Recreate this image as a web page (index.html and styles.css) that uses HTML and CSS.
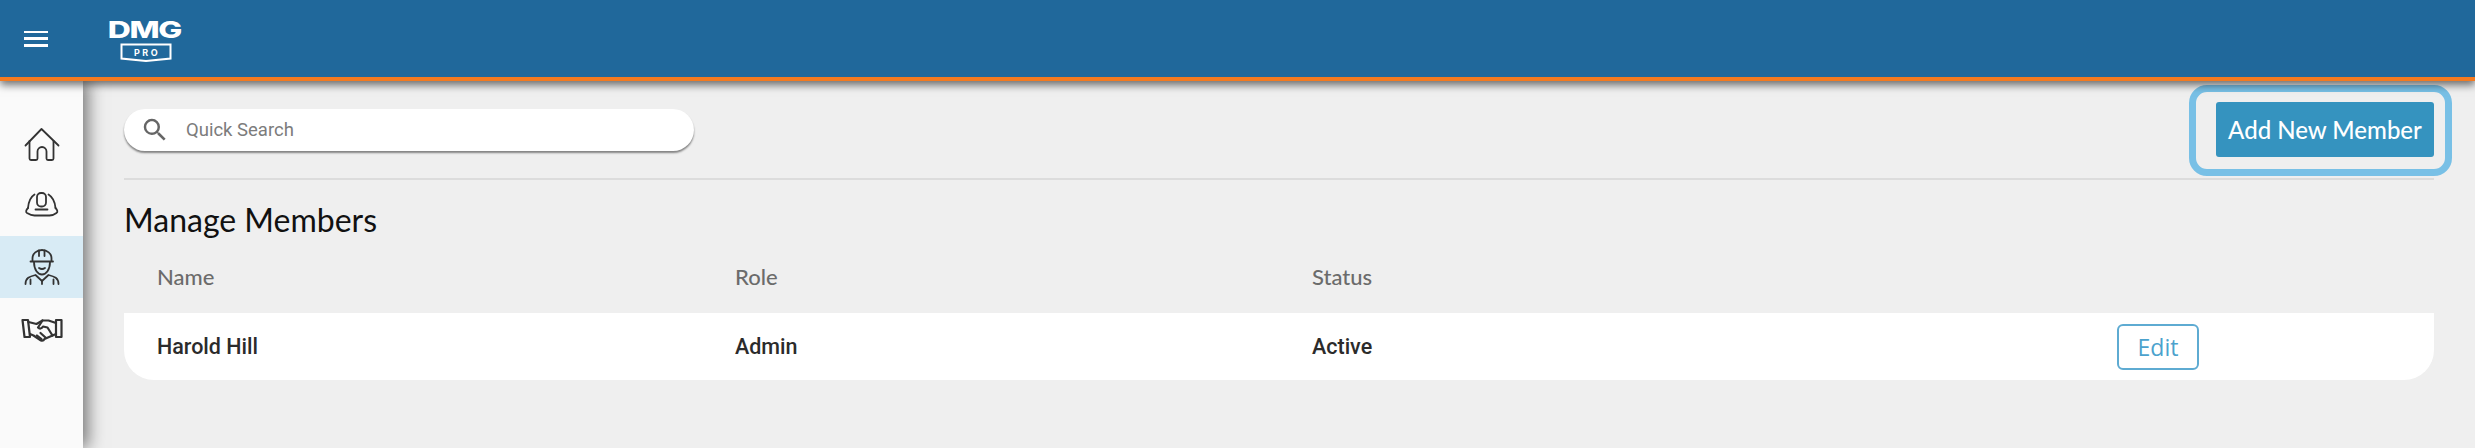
FILE: index.html
```html
<html>
<head>
    <link rel="stylesheet" href="styles.css">
</head>
<body>
    <header class="topbar">
        <button class="menu-btn">
            <span class="menu-line"></span>
            <span class="menu-line"></span>
            <span class="menu-line"></span>
        </button>
        <div class="logo">
            <div class="logo-name">DMG</div>
            <div class="logo-badge">
                <svg class="logo-frame" viewBox="0 0 52 19" fill="none" stroke="#fff" stroke-width="2">
                    <path d="M1.5 1.5H50.5V15.5L26 18L1.5 15.5Z"/>
                </svg>
                <span class="logo-pro">PRO</span>
            </div>
        </div>
    </header>

    <div class="layout">
        <nav class="sidebar">
            <a class="nav-item">
                <svg class="nav-icon" viewBox="19.5 121 44 44">
                    <path d="M25 145.5L41 129L58 145.5"/>
                    <path d="M29 141V158.500Q29 160 30.500 160H35.500Q37 160 37 158.500V151.500A4.500 4.500 0 0 1 46 151.500V158.500Q46 160 47.500 160H51.500Q53 160 53 158.500V141"/>
                </svg>
            </a>
            <a class="nav-item">
                <svg class="nav-icon" viewBox="19.5 183 44 44">
                    <path d="M27.500 208C28 202 30 197 34 194.500"/>
                    <path d="M48 194.500C52 197 54.500 202 55 208"/>
                    <rect x="36.500" y="193" width="9" height="13.500" rx="4"/>
                    <path d="M35 209.500H47"/>
                    <path d="M27.500 208C25.500 210 25 212 26.500 213C29 214.500 31 215.500 34 215.500H49C52 215.500 54 214.500 56 213C57.500 212 57 210 55 208"/>
                </svg>
            </a>
            <a class="nav-item active">
                <svg class="nav-icon" viewBox="19.500 245 44 44">
                    <path d="M32 260.500V258A9.500 8 0 0 1 51 258V260.500"/>
                    <path d="M30 261.500H52.500"/>
                    <path d="M38.500 250.500V256M44 250.500V256"/>
                    <path d="M33.500 262C33.500 270 37.500 274.500 41.500 274.500S49.500 270 49.500 262"/>
                    <path d="M38.500 268Q41.500 270 44.500 268"/>
                    <path d="M25 284C25 278 29 276.500 35 275L41.500 281L48 275C54 276.500 58 278 58 284"/>
                    <path d="M30 284V279.500M53 284V279.500M41.500 281V284"/>
                </svg>
            </a>
            <a class="nav-item">
                <svg class="nav-icon icon-heavy" viewBox="19.500 307 44 44">
                    <path d="M22 320H27.500L29.500 337H24Z"/>
                    <path d="M61 320H55.500V337H61Z"/>
                    <path d="M28 322L36 324L42 320.500H48L55.500 323"/>
                    <path d="M29.500 334L33 335.500L40.500 340.500C42 341 43.500 340 44 339L52 335.500L55.500 334"/>
                    <path d="M42 320.500L37.500 327.500C39 329 41 329 42.500 326.500L47 327.500L52 335.500"/>
                    <path d="M36.500 335.500L41 339M40 333L45 337.500"/>
                </svg>
            </a>
        </nav>

        <main class="content">
            <div class="toolbar">
                <div class="search">
                    <svg class="search-icon" viewBox="0 0 24 24">
                        <path d="M15.500 14h-.79l-.28-.27A6.471 6.471 0 0 0 16 9.500 6.500 6.500 0 1 0 9.500 16c1.610 0 3.090-.59 4.230-1.570l.27.28v.79l5 4.990L20.490 19l-4.990-5zm-6 0C7.010 14 5 11.990 5 9.500S7.010 5 9.500 5 14 7.010 14 9.500 11.990 14 9.500 14z"/>
                    </svg>
                    <span class="search-text">Quick Search</span>
                </div>
                <button class="add-btn">Add New Member</button>
            </div>

            <h1 class="page-title">Manage Members</h1>

            <div class="table-head">
                <div>Name</div>
                <div>Role</div>
                <div>Status</div>
            </div>
            <div class="table-row">
                <div>Harold Hill</div>
                <div>Admin</div>
                <div>Active</div>
                <button class="edit-btn">Edit</button>
            </div>
        </main>
    </div>
</body>
</html>
```

FILE: styles.css
```css
* {
    box-sizing: border-box;
}
body {
    margin: 0;
    height: 448px;
    overflow: hidden;
    display: flex;
    flex-direction: column;
    font-family: Roboto, sans-serif;
    background-color: #efefef;
}
.topbar {
    position: relative;
    z-index: 2;
    height: 81px;
    flex-shrink: 0;
    display: flex;
    align-items: center;
    padding-left: 24px;
    background-color: #20689b;
    border-bottom: 4px solid #f47a20;
    box-shadow: 0 4px 8px rgba(0, 0, 0, 0.55);
}
.menu-btn {
    width: 24px;
    height: 16px;
    padding: 0;
    border: none;
    background: none;
    display: flex;
    flex-direction: column;
    justify-content: space-between;
}
.menu-line {
    display: block;
    height: 2.500px;
    background-color: #fff;
}
.logo {
    margin-left: 61px;
    margin-top: 5px;
    width: 74px;
    display: flex;
    flex-direction: column;
    align-items: center;
    color: #fff;
}
.logo-name {
    margin-right: 4px;
    font-family: Inter, sans-serif;
    font-weight: 800;
    font-size: 23px;
    line-height: 19px;
    letter-spacing: -1px;
    transform: scaleX(1.39);
}
.logo-badge {
    position: relative;
    width: 52px;
    height: 19px;
    margin-top: 3px;
    display: flex;
    align-items: center;
    justify-content: center;
}
.logo-frame {
    position: absolute;
    left: 0;
    top: 0;
    width: 52px;
    height: 19px;
}
.logo-pro {
    font-family: Inter, sans-serif;
    font-size: 9px;
    font-weight: 700;
    letter-spacing: 2.500px;
    margin-left: 2px;
}
.layout {
    flex: 1;
    display: flex;
    min-height: 0;
}
.sidebar {
    position: relative;
    z-index: 1;
    width: 83px;
    flex-shrink: 0;
    padding-top: 31px;
    background-color: #fafafa;
    box-shadow: 5px 0 16px rgba(0, 0, 0, 0.5);
}
.nav-item {
    height: 62px;
    display: flex;
    align-items: center;
    justify-content: center;
}
.nav-item.active {
    background-color: #d8ebf5;
}
.nav-icon {
    width: 44px;
    height: 44px;
    fill: none;
    stroke: #333;
    stroke-width: 1.800;
    stroke-linecap: round;
    stroke-linejoin: round;
}
.icon-heavy {
    stroke-width: 2.200;
}
.content {
    flex: 1;
    padding: 21px 41px 0;
}
.toolbar {
    display: flex;
    justify-content: space-between;
    align-items: center;
    padding-bottom: 21px;
    border-bottom: 2px solid #dcdcdc;
}
.search {
    width: 570px;
    height: 42px;
    display: flex;
    align-items: center;
    padding-left: 16px;
    gap: 16px;
    background-color: #fff;
    border-radius: 21px;
    box-shadow: 0 2px 2px rgba(0, 0, 0, 0.45);
}
.search-icon {
    width: 30px;
    height: 30px;
    fill: #666;
}
.search-text {
    font-size: 18.500px;
    color: #7c7c7c;
}
.add-btn {
    position: relative;
    width: 218px;
    height: 55px;
    border: none;
    border-radius: 3px;
    background-color: #3593bf;
    color: #fff;
    font-family: Lato, sans-serif;
    font-size: 24px;
    font-weight: 500;
}
.add-btn::after {
    content: "";
    position: absolute;
    left: -27px;
    right: -18px;
    top: -17px;
    bottom: -19px;
    border: 7px solid #78c0e6;
    border-radius: 18px;
}
.page-title {
    margin: 20px 0 0;
    font-family: Lato, sans-serif;
    font-size: 32px;
    line-height: 40px;
    font-weight: 400;
    color: #111;
}
.table-head,
.table-row {
    display: grid;
    grid-template-columns: 578px 577px 805px 82px;
    padding-left: 33px;
    align-items: center;
}
.table-head {
    height: 73px;
    padding-top: 0;
    font-family: Lato, sans-serif;
    font-size: 22px;
    font-weight: 500;
    color: #6b6b6b;
}
.table-row {
    height: 67px;
    background-color: #fff;
    border-radius: 0 0 30px 30px;
    font-size: 21.500px;
    font-weight: 500;
    color: #2b2b2b;
}
.edit-btn {
    height: 46px;
    padding: 0;
    border: 2px solid #5eabd2;
    border-radius: 6px;
    background-color: #fff;
    color: #4ba2cd;
    font-family: "Open Sans", sans-serif;
    font-size: 23px;
}
```
